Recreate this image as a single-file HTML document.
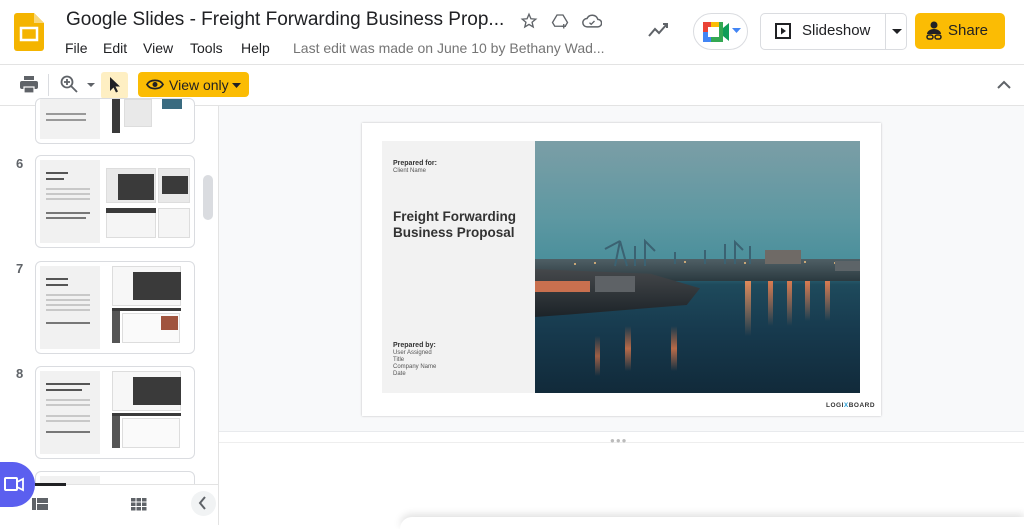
<!DOCTYPE html>
<html><head><meta charset="utf-8">
<style>
*{margin:0;padding:0;box-sizing:border-box}
body{width:1024px;height:525px;overflow:hidden;background:#fff;font-family:"Liberation Sans",Arial,sans-serif;position:relative;color:#202124}
.a{position:absolute}
.title{left:66px;top:9px;font-size:19px;color:#202124}
.menu{top:40px;font-size:14px;color:#202124}
.gray{color:#757575}
.thumb{position:absolute;left:35px;width:160px;border:1.5px solid #dadce0;border-radius:6px;background:#fff;overflow:hidden}
.thumb .l{position:absolute;left:4px;top:4px;bottom:4px;width:60px;background:#f1f1f1}
.num{position:absolute;left:16px;font-size:13px;color:#5f6368;font-weight:bold}
.ln{position:absolute;height:1.5px;background:#c8c8c8}
.dk{position:absolute;background:#3a3a3a}
.lt{position:absolute;background:#e9e9e9;border:1px solid #ddd}
</style></head><body>
<!-- header -->
<svg class="a" style="left:14px;top:13px" width="30" height="38" viewBox="0 0 30 38"><path d="M3 0h17l10 10v25a3 3 0 0 1-3 3H3a3 3 0 0 1-3-3V3a3 3 0 0 1 3-3z" fill="#f4b400"/><path d="M20 0v10h10z" fill="#f8d77a"/><rect x="7" y="15" width="16" height="12" fill="none" stroke="#fff" stroke-width="2.5"/></svg>
<div class="a title">Google Slides - Freight Forwarding Business Prop...</div>
<div class="a menu" style="left:65px">File</div>
<div class="a menu" style="left:103px">Edit</div>
<div class="a menu" style="left:143px">View</div>
<div class="a menu" style="left:190px">Tools</div>
<div class="a menu" style="left:241px">Help</div>
<div class="a menu gray" style="left:293px">Last edit was made on June 10 by Bethany Wad...</div>
<svg class="a" style="left:520px;top:12px" width="18" height="18" viewBox="0 0 24 24"><path d="M12 3l2.6 6 6.4.5-4.9 4.2 1.5 6.3L12 16.6 6.4 20l1.5-6.3L3 9.5l6.4-.5z" fill="none" stroke="#5f6368" stroke-width="1.8"/></svg>
<svg class="a" style="left:551px;top:12px" width="18" height="18" viewBox="0 0 24 24"><path d="M8 4h8l6 10-3 5H5l-3-5z" fill="none" stroke="#5f6368" stroke-width="1.8"/><path d="M17 16v6M14 19h6" stroke="#5f6368" stroke-width="1.8"/></svg>
<svg class="a" style="left:582px;top:12px" width="20" height="18" viewBox="0 0 24 20"><path d="M6 17a5 5 0 0 1 0-10 7 7 0 0 1 13 1 4.5 4.5 0 0 1 0 9z" fill="none" stroke="#5f6368" stroke-width="1.8"/><path d="M9 12l2 2 4-4" fill="none" stroke="#5f6368" stroke-width="1.6"/></svg>
<svg class="a" style="left:648px;top:22px" width="22" height="16" viewBox="0 0 22 16"><path d="M1 14l6-7 4 4 8-9M15 2h4v4" fill="none" stroke="#5f6368" stroke-width="2"/></svg>
<div class="a" style="left:693px;top:13px;width:55px;height:37px;border:1px solid #dadce0;border-radius:19px"></div>
<svg class="a" style="left:703px;top:22px" width="26" height="20" viewBox="0 0 26 20"><rect x="0" y="0" width="8" height="10" fill="#ea4335"/><rect x="0" y="10" width="8" height="10" fill="#4285f4"/><rect x="8" y="0" width="8" height="5" fill="#fbbc04"/><rect x="8" y="15" width="8" height="5" fill="#34a853"/><rect x="16" y="0" width="4" height="20" fill="#34a853"/><path d="M20 6l6-5v18l-6-5z" fill="#0f9d58"/><rect x="5" y="5" width="11" height="10" fill="#fff"/></svg>
<svg class="a" style="left:732px;top:28px" width="9" height="6"><path d="M0 0h9L4.5 5z" fill="#4285f4"/></svg>
<div class="a" style="left:760px;top:13px;width:147px;height:37px;border:1px solid #dadce0;border-radius:5px"></div>
<div class="a" style="left:885px;top:13px;width:1px;height:37px;background:#dadce0"></div>
<svg class="a" style="left:775px;top:23px" width="16" height="16" viewBox="0 0 16 16"><rect x="1" y="1" width="14" height="14" fill="none" stroke="#202124" stroke-width="2"/><path d="M6 4.5v7l5-3.5z" fill="#202124"/></svg>
<div class="a" style="left:802px;top:22px;font-size:15px;color:#202124">Slideshow</div>
<svg class="a" style="left:892px;top:29px" width="10" height="5"><path d="M0 0h10L5 5z" fill="#202124"/></svg>
<div class="a" style="left:915px;top:13px;width:90px;height:36px;background:#fbbc04;border-radius:5px"></div>
<svg class="a" style="left:925px;top:21px" width="18" height="20" viewBox="0 0 18 20"><circle cx="9" cy="4" r="3.5" fill="#202124"/><path d="M2 13a7 5 0 0 1 14 0z" fill="#202124"/><rect x="2" y="14" width="6" height="4" rx="2" fill="none" stroke="#202124" stroke-width="1.5"/><rect x="10" y="14" width="6" height="4" rx="2" fill="none" stroke="#202124" stroke-width="1.5"/></svg>
<div class="a" style="left:948px;top:22px;font-size:15px;color:#202124">Share</div>
<div class="a" style="left:0;top:64px;width:1024px;height:1px;background:#e3e3e3"></div>
<!-- toolbar -->
<svg class="a" style="left:19px;top:76px" width="20" height="18" viewBox="0 0 20 18"><rect x="5" y="0" width="10" height="4" fill="#5f6368"/><rect x="1" y="5" width="18" height="8" rx="2" fill="#5f6368"/><rect x="5" y="11" width="10" height="6" fill="#5f6368" stroke="#fff" stroke-width="1.2"/></svg>
<div class="a" style="left:48px;top:74px;width:1px;height:22px;background:#dadce0"></div>
<svg class="a" style="left:60px;top:75px" width="18" height="18" viewBox="0 0 18 18"><circle cx="7" cy="7" r="5.5" fill="none" stroke="#5f6368" stroke-width="1.8"/><path d="M11 11l6 6M4 7h6M7 4v6" stroke="#5f6368" stroke-width="1.8"/></svg>
<svg class="a" style="left:87px;top:83px" width="8" height="4"><path d="M0 0h8L4 4z" fill="#5f6368"/></svg>
<div class="a" style="left:101px;top:72px;width:27px;height:27px;background:#feefc3;border-radius:3px"></div>
<svg class="a" style="left:109px;top:76px" width="12" height="18" viewBox="0 0 12 18"><path d="M1 1v14l3.5-3.5 2.5 5 2-1-2.5-5H11z" fill="#202124"/></svg>
<div class="a" style="left:138px;top:72px;width:111px;height:25px;background:#fbbc04;border-radius:4px"></div>
<svg class="a" style="left:146px;top:78px" width="18" height="13" viewBox="0 0 18 13"><path d="M1 6.5C4 1 14 1 17 6.5 14 12 4 12 1 6.5z" fill="none" stroke="#202124" stroke-width="1.8"/><circle cx="9" cy="6.5" r="2.5" fill="#202124"/></svg>
<div class="a" style="left:169px;top:77px;font-size:14px;color:#202124">View only</div>
<svg class="a" style="left:232px;top:83px" width="9" height="5"><path d="M0 0h9L4.5 5z" fill="#202124"/></svg>
<svg class="a" style="left:997px;top:80px" width="14" height="9"><path d="M1 8l6-6 6 6" fill="none" stroke="#5f6368" stroke-width="2"/></svg>
<div class="a" style="left:0;top:105px;width:1024px;height:1px;background:#e3e3e3"></div>
<!-- canvas -->
<div class="a" style="left:219px;top:106px;width:805px;height:325px;background:#f8f9fa"></div>
<div class="a" style="left:219px;top:431px;width:805px;height:1px;background:#e8eaed"></div>
<div class="a" style="left:219px;top:442px;width:805px;height:1px;background:#eeeeee"></div>
<div class="a" style="left:610px;top:436px;font-size:8px;color:#bbb;letter-spacing:1px">●●●</div>
<div class="a" style="left:400px;top:517px;width:624px;height:12px;background:#fff;box-shadow:0 -3px 8px rgba(0,0,0,.12);border-radius:20px 0 0 0"></div>
<div class="a" style="left:218px;top:106px;width:1px;height:419px;background:#e3e3e3"></div>
<!-- slide -->
<div class="a" style="left:362px;top:123px;width:519px;height:293px;background:#fff;box-shadow:0 0 2px rgba(0,0,0,.25)"></div>
<div class="a" style="left:382px;top:141px;width:153px;height:252px;background:#f2f2f2"></div>
<div class="a" style="left:393px;top:160px;font-size:7px;font-weight:bold;color:#333">Prepared for:</div>
<div class="a" style="left:393px;top:168px;font-size:6px;color:#555">Client Name</div>
<div class="a" style="left:393px;top:209px;font-size:13.5px;font-weight:bold;color:#333;line-height:15.5px">Freight Forwarding<br>Business Proposal</div>
<div class="a" style="left:393px;top:342px;font-size:7px;font-weight:bold;color:#333">Prepared by:</div>
<div class="a" style="left:393px;top:350px;font-size:6px;color:#555;line-height:7px">User Assigned<br>Title<br>Company Name<br>Date</div>
<div class="a" style="left:826px;top:402px;font-size:6.5px;font-weight:bold;color:#333;letter-spacing:.5px">LOGI<span style="color:#2a9fd6">X</span>BOARD</div>
<div class="a" style="left:535px;top:141px;width:325px;height:252px;overflow:hidden;background:linear-gradient(#7b9ea6 0%,#5e98a2 30%,#4a8f9b 48%,#3f8592 50%,#1e4a5c 57%,#173a4e 75%,#112a3a 100%)">
  <div class="a" style="left:0;top:118px;width:325px;height:22px;background:linear-gradient(#4f5f65,#2b3a40)"></div>
  <div class="a" style="left:0;top:128px;width:165px;height:48px;background:linear-gradient(#45484b,#1c2328);clip-path:polygon(0 0,70% 10%,100% 40%,92% 75%,20% 95%,0 100%)"></div>
  <div class="a" style="left:0;top:140px;width:55px;height:11px;background:#c9704f"></div>
  <div class="a" style="left:60px;top:135px;width:40px;height:16px;background:#5e6266"></div>
  <svg class="a" style="left:0;top:95px" width="325" height="40"><g stroke="#3b6272" stroke-width="2" fill="none"><path d="M80 30L85 5 92 30M85 5l-15 8M100 30V10M110 30V5l10 10M190 28V8M200 28V6l8 8M215 28V10M170 28v-14M140 28v-12"/></g><rect x="230" y="14" width="36" height="14" fill="#6f6a66"/><g fill="#f0c080"><circle cx="40" cy="28" r="1"/><circle cx="60" cy="27" r="1"/><circle cx="150" cy="26" r="1"/><circle cx="210" cy="27" r="1"/><circle cx="270" cy="26" r="1"/><circle cx="300" cy="27" r="1"/></g></svg>
  <div class="a" style="left:210px;top:140px;width:6px;height:55px;background:linear-gradient(#e08a5a,transparent)"></div>
  <div class="a" style="left:233px;top:140px;width:5px;height:45px;background:linear-gradient(#d97b50,transparent)"></div>
  <div class="a" style="left:252px;top:140px;width:5px;height:45px;background:linear-gradient(#d97b50,transparent)"></div>
  <div class="a" style="left:270px;top:140px;width:5px;height:40px;background:linear-gradient(#d97b50,transparent)"></div>
  <div class="a" style="left:290px;top:140px;width:5px;height:40px;background:linear-gradient(#d97b50,transparent)"></div>
  <div class="a" style="left:300px;top:120px;width:25px;height:10px;background:#5d6468"></div>
  <div class="a" style="left:90px;top:185px;width:6px;height:45px;background:linear-gradient(transparent,#b86a48,transparent)"></div>
  <div class="a" style="left:136px;top:185px;width:6px;height:45px;background:linear-gradient(transparent,#b86a48,transparent)"></div>
  <div class="a" style="left:60px;top:195px;width:5px;height:40px;background:linear-gradient(transparent,#9d5e45,transparent)"></div>
</div>
<!-- left panel -->
<div class="a" style="left:203px;top:175px;width:10px;height:45px;background:#dadce0;border-radius:5px"></div>
<div class="thumb" style="top:98px;height:46px"><div class="l" style="top:-10px"></div>
<div class="ln" style="left:10px;top:14px;width:40px;background:#999"></div><div class="ln" style="left:10px;top:20px;width:40px;background:#999"></div>
<div class="dk" style="left:76px;top:0;width:8px;height:34px"></div><div class="lt" style="left:88px;top:0;width:28px;height:28px"></div><div class="dk" style="left:126px;top:0;width:20px;height:10px;background:#3a6b80"></div></div>
<div class="num" style="top:156px">6</div>
<div class="thumb" style="top:155px;height:93px"><div class="l"></div>
<div class="ln" style="left:10px;top:16px;width:22px;background:#555"></div><div class="ln" style="left:10px;top:22px;width:18px;background:#555"></div>
<div class="ln" style="left:10px;top:32px;width:44px"></div><div class="ln" style="left:10px;top:37px;width:44px"></div><div class="ln" style="left:10px;top:42px;width:44px"></div><div class="ln" style="left:10px;top:56px;width:44px;background:#777"></div><div class="ln" style="left:10px;top:61px;width:40px;background:#777"></div>
<div class="lt" style="left:70px;top:12px;width:50px;height:35px"></div><div class="dk" style="left:82px;top:18px;width:36px;height:26px"></div>
<div class="lt" style="left:122px;top:12px;width:32px;height:35px"></div><div class="dk" style="left:126px;top:20px;width:26px;height:18px"></div>
<div class="lt" style="left:70px;top:52px;width:50px;height:30px;background:#f5f5f5"></div><div class="dk" style="left:70px;top:52px;width:50px;height:5px"></div>
<div class="lt" style="left:122px;top:52px;width:32px;height:30px;background:#f5f5f5"></div></div>
<div class="num" style="top:261px">7</div>
<div class="thumb" style="top:261px;height:93px"><div class="l"></div>
<div class="ln" style="left:10px;top:16px;width:22px;background:#555"></div><div class="ln" style="left:10px;top:22px;width:22px;background:#555"></div>
<div class="ln" style="left:10px;top:32px;width:44px"></div><div class="ln" style="left:10px;top:37px;width:44px"></div><div class="ln" style="left:10px;top:42px;width:44px"></div><div class="ln" style="left:10px;top:47px;width:44px"></div><div class="ln" style="left:10px;top:60px;width:44px;background:#777"></div>
<div class="lt" style="left:76px;top:4px;width:69px;height:40px;background:#f7f7f7"></div><div class="dk" style="left:97px;top:10px;width:48px;height:28px"></div><div class="dk" style="left:76px;top:46px;width:69px;height:3px"></div><div class="dk" style="left:76px;top:49px;width:8px;height:32px;background:#555"></div><div class="lt" style="left:86px;top:51px;width:58px;height:30px;background:#fafafa"></div><div class="dk" style="left:125px;top:54px;width:17px;height:14px;background:#a0543e"></div></div>
<div class="num" style="top:366px">8</div>
<div class="thumb" style="top:366px;height:93px"><div class="l"></div>
<div class="ln" style="left:10px;top:16px;width:44px;background:#555"></div><div class="ln" style="left:10px;top:22px;width:36px;background:#555"></div>
<div class="ln" style="left:10px;top:32px;width:44px"></div><div class="ln" style="left:10px;top:37px;width:44px"></div><div class="ln" style="left:10px;top:48px;width:44px"></div><div class="ln" style="left:10px;top:53px;width:44px"></div><div class="ln" style="left:10px;top:64px;width:44px;background:#777"></div>
<div class="lt" style="left:76px;top:4px;width:69px;height:40px;background:#f7f7f7"></div><div class="dk" style="left:97px;top:10px;width:48px;height:28px"></div><div class="dk" style="left:76px;top:46px;width:69px;height:3px"></div><div class="dk" style="left:76px;top:49px;width:8px;height:32px;background:#555"></div><div class="lt" style="left:86px;top:51px;width:58px;height:30px;background:#fafafa"></div></div>
<div class="thumb" style="top:471px;height:40px"><div class="l"></div></div>
<div class="a" style="left:0;top:484px;width:218px;height:41px;background:#fff;border-top:1px solid #e3e3e3"></div>
<div class="a" style="left:35px;top:483px;width:31px;height:3px;background:#202124"></div>
<div class="a" style="left:-20px;top:462px;width:55px;height:45px;background:#5b5fef;border-radius:0 23px 23px 0"></div>
<svg class="a" style="left:4px;top:477px" width="20" height="15" viewBox="0 0 20 15"><rect x="1" y="1" width="12" height="12" rx="1" fill="none" stroke="#fff" stroke-width="2"/><path d="M13 5l6-3v11l-6-3z" fill="none" stroke="#fff" stroke-width="1.8"/></svg>
<svg class="a" style="left:32px;top:498px" width="16" height="12" viewBox="0 0 16 12"><rect x="0" y="0" width="4" height="12" fill="#5f6368"/><rect x="5" y="0" width="11" height="5" fill="#5f6368"/><rect x="5" y="6" width="11" height="6" fill="#5f6368"/></svg>
<svg class="a" style="left:131px;top:498px" width="16" height="13" viewBox="0 0 16 13"><g fill="#5f6368"><rect x="0" y="0" width="4.5" height="3.5"/><rect x="5.5" y="0" width="4.5" height="3.5"/><rect x="11" y="0" width="4.5" height="3.5"/><rect x="0" y="4.5" width="4.5" height="3.5"/><rect x="5.5" y="4.5" width="4.5" height="3.5"/><rect x="11" y="4.5" width="4.5" height="3.5"/><rect x="0" y="9" width="4.5" height="3.5"/><rect x="5.5" y="9" width="4.5" height="3.5"/><rect x="11" y="9" width="4.5" height="3.5"/></g></svg>
<div class="a" style="left:191px;top:491px;width:25px;height:25px;background:#f1f3f4;border-radius:50%"></div>
<svg class="a" style="left:198px;top:496px" width="9" height="14"><path d="M7 1L2 7l5 6" fill="none" stroke="#5f6368" stroke-width="2"/></svg>
</body></html>
